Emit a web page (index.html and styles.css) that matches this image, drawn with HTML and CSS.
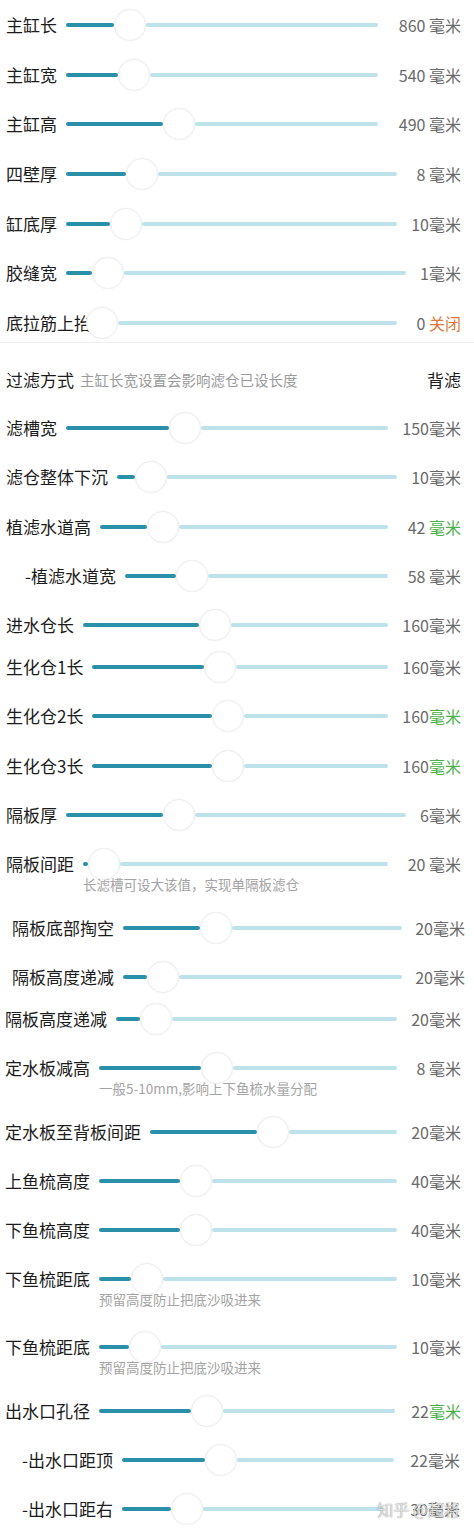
FILE: index.html
```html
<!DOCTYPE html>
<html lang="zh-CN">
<head>
<meta charset="utf-8">
<title>鱼缸参数设置</title>
<link rel="stylesheet" href="styles.css">
</head>
<body>
<main class="panel">

  <section class="group group--tank">
    <div class="row end-378">
      <span class="label">主缸长</span>
      <div class="slider"><i class="fill" style="width:48px"></i><i class="thumb"></i><i class="rest"></i></div>
      <span class="value">860 毫米</span>
    </div>
    <div class="row end-378">
      <span class="label">主缸宽</span>
      <div class="slider"><i class="fill" style="width:52px"></i><i class="thumb"></i><i class="rest"></i></div>
      <span class="value">540 毫米</span>
    </div>
    <div class="row end-378">
      <span class="label">主缸高</span>
      <div class="slider"><i class="fill" style="width:97px"></i><i class="thumb"></i><i class="rest"></i></div>
      <span class="value">490 毫米</span>
    </div>
    <div class="row end-397">
      <span class="label">四壁厚</span>
      <div class="slider"><i class="fill" style="width:60px"></i><i class="thumb"></i><i class="rest"></i></div>
      <span class="value">8 毫米</span>
    </div>
    <div class="row end-397">
      <span class="label">缸底厚</span>
      <div class="slider"><i class="fill" style="width:44px"></i><i class="thumb"></i><i class="rest"></i></div>
      <span class="value">10毫米</span>
    </div>
    <div class="row end-406">
      <span class="label">胶缝宽</span>
      <div class="slider"><i class="fill" style="width:26px"></i><i class="thumb"></i><i class="rest"></i></div>
      <span class="value">1毫米</span>
    </div>
    <div class="row end-397">
      <span class="label">底拉筋上抬</span>
      <div class="slider slider--overlap"><i class="fill" style="width:0px"></i><i class="thumb"></i><i class="rest"></i></div>
      <span class="value">0 <em class="off">关闭</em></span>
    </div>
  </section>

  <hr class="divider">

  <div class="filter-head">
    <span class="label">过滤方式</span>
    <span class="filter-note">主缸长宽设置会影响滤仓已设长度</span>
    <span class="filter-type">背滤</span>
  </div>

  <section class="group group--filter">
    <div class="row end-388">
      <span class="label">滤槽宽</span>
      <div class="slider"><i class="fill" style="width:103px"></i><i class="thumb"></i><i class="rest"></i></div>
      <span class="value">150毫米</span>
    </div>
    <div class="row end-397">
      <span class="label">滤仓整体下沉</span>
      <div class="slider"><i class="fill" style="width:18px"></i><i class="thumb"></i><i class="rest"></i></div>
      <span class="value">10毫米</span>
    </div>
    <div class="row end-388">
      <span class="label">植滤水道高</span>
      <div class="slider"><i class="fill" style="width:47px"></i><i class="thumb"></i><i class="rest"></i></div>
      <span class="value">42 <em class="ok">毫米</em></span>
    </div>
    <div class="row row--sub end-388">
      <span class="label">-植滤水道宽</span>
      <div class="slider"><i class="fill" style="width:51px"></i><i class="thumb"></i><i class="rest"></i></div>
      <span class="value">58 毫米</span>
    </div>
    <div class="row end-388">
      <span class="label">进水仓长</span>
      <div class="slider"><i class="fill" style="width:116px"></i><i class="thumb"></i><i class="rest"></i></div>
      <span class="value">160毫米</span>
    </div>
    <div class="row row--tight end-388">
      <span class="label">生化仓1长</span>
      <div class="slider"><i class="fill" style="width:112px"></i><i class="thumb"></i><i class="rest"></i></div>
      <span class="value">160毫米</span>
    </div>
    <div class="row end-388">
      <span class="label">生化仓2长</span>
      <div class="slider"><i class="fill" style="width:120px"></i><i class="thumb"></i><i class="rest"></i></div>
      <span class="value">160<em class="ok">毫米</em></span>
    </div>
    <div class="row end-388">
      <span class="label">生化仓3长</span>
      <div class="slider"><i class="fill" style="width:120px"></i><i class="thumb"></i><i class="rest"></i></div>
      <span class="value">160<em class="ok">毫米</em></span>
    </div>
    <div class="row end-406">
      <span class="label">隔板厚</span>
      <div class="slider"><i class="fill" style="width:97px"></i><i class="thumb"></i><i class="rest"></i></div>
      <span class="value">6毫米</span>
    </div>
    <div class="row end-388">
      <span class="label">隔板间距</span>
      <div class="slider"><i class="fill" style="width:5px"></i><i class="thumb"></i><i class="rest"></i></div>
      <span class="value">20 毫米</span>
      <p class="hint">长滤槽可设大该值，实现单隔板滤仓</p>
    </div>
    <div class="row row--indent end-402">
      <span class="label">隔板底部掏空</span>
      <div class="slider"><i class="fill" style="width:77px"></i><i class="thumb"></i><i class="rest"></i></div>
      <span class="value">20毫米</span>
    </div>
    <div class="row row--indent end-402">
      <span class="label">隔板高度递减</span>
      <div class="slider"><i class="fill" style="width:24px"></i><i class="thumb"></i><i class="rest"></i></div>
      <span class="value">20毫米</span>
    </div>
    <div class="row row--flush row--tight end-397">
      <span class="label">隔板高度递减</span>
      <div class="slider"><i class="fill" style="width:24px"></i><i class="thumb"></i><i class="rest"></i></div>
      <span class="value">20毫米</span>
    </div>
    <div class="row row--flush end-397">
      <span class="label">定水板减高</span>
      <div class="slider"><i class="fill" style="width:102px"></i><i class="thumb"></i><i class="rest"></i></div>
      <span class="value">8 毫米</span>
      <p class="hint">一般5-10mm,影响上下鱼梳水量分配</p>
    </div>
    <div class="row row--flush end-397">
      <span class="label">定水板至背板间距</span>
      <div class="slider"><i class="fill" style="width:107px"></i><i class="thumb"></i><i class="rest"></i></div>
      <span class="value">20毫米</span>
    </div>
    <div class="row row--flush end-397">
      <span class="label">上鱼梳高度</span>
      <div class="slider"><i class="fill" style="width:81px"></i><i class="thumb"></i><i class="rest"></i></div>
      <span class="value">40毫米</span>
    </div>
    <div class="row row--flush end-397">
      <span class="label">下鱼梳高度</span>
      <div class="slider"><i class="fill" style="width:81px"></i><i class="thumb"></i><i class="rest"></i></div>
      <span class="value">40毫米</span>
    </div>
    <div class="row row--flush end-397">
      <span class="label">下鱼梳距底</span>
      <div class="slider"><i class="fill" style="width:32px"></i><i class="thumb"></i><i class="rest"></i></div>
      <span class="value">10毫米</span>
      <p class="hint hint--loose">预留高度防止把底沙吸进来</p>
    </div>
    <div class="row row--flush end-397">
      <span class="label">下鱼梳距底</span>
      <div class="slider"><i class="fill" style="width:30px"></i><i class="thumb"></i><i class="rest"></i></div>
      <span class="value">10毫米</span>
      <p class="hint">预留高度防止把底沙吸进来</p>
    </div>
    <div class="row row--flush end-395">
      <span class="label">出水口孔径</span>
      <div class="slider"><i class="fill" style="width:92px"></i><i class="thumb"></i><i class="rest"></i></div>
      <span class="value">22<em class="ok">毫米</em></span>
    </div>
    <div class="row row--outlet end-395">
      <span class="label">-出水口距顶</span>
      <div class="slider"><i class="fill" style="width:83px"></i><i class="thumb"></i><i class="rest"></i></div>
      <span class="value">22毫米</span>
    </div>
    <div class="row row--outlet end-385">
      <span class="label">-出水口距右</span>
      <div class="slider"><i class="fill" style="width:49px"></i><i class="thumb"></i><i class="rest"></i></div>
      <span class="value value--marked">30毫米<span class="watermark">知乎 @超将</span></span>
    </div>
  </section>

</main>
</body>
</html>
```

FILE: styles.css
```css
* {
  box-sizing: border-box;
}

html,
body {
  margin: 0;
  background: #ffffff;
}

body {
  font-family: "Noto Sans CJK SC", "Noto Sans", sans-serif;
  color: #1f1f1f;
  -webkit-font-smoothing: antialiased;
}

.panel {
  width: 474px;
  padding: 9px 13px 0 0;
}

/* ---------- slider rows ---------- */

.group {
  display: flex;
  flex-direction: column;
}

.group--tank {
  gap: 17.67px;
}

.group--filter {
  gap: 17.3px;
  margin-top: 16px;
}

.row {
  --value-w: 55px;
  display: grid;
  grid-template-columns: auto 1fr var(--value-w);
  grid-template-rows: 32px;
  column-gap: 9px;
  align-items: center;
  padding-left: 6px;
}

.row--tight {
  margin-top: -7.3px;
}

.row--indent {
  padding-left: 12px;
  margin-right: -4px;
}

.row--flush {
  padding-left: 5px;
}

.row--sub {
  padding-left: 25px;
}

.row--outlet {
  padding-left: 22px;
  margin-right: 1px;
}

/* right end of the track, expressed as the width left for the value */
.end-378 { --value-w: 74px; }
.end-385 { --value-w: 67px; }
.end-388 { --value-w: 64px; }
.end-395 { --value-w: 57px; }
.end-397 { --value-w: 55px; }
.end-402 { --value-w: 54px; }
.end-406 { --value-w: 46px; }

.label {
  font-size: 17px;
  line-height: 24px;
  color: #1c1c1c;
  white-space: nowrap;
}

.value {
  font-size: 16px;
  line-height: 24px;
  color: #6a6a6a;
  text-align: right;
  white-space: nowrap;
}

.value em {
  font-style: normal;
}

.off {
  color: #e0793a;
}

.ok {
  color: #4db14a;
}

.slider {
  position: relative;
  display: flex;
  align-items: center;
  height: 32px;
}

.slider--overlap {
  margin-left: -14px;
}

.fill,
.rest {
  display: block;
  height: 4px;
  border-radius: 2px;
}

.fill {
  flex: none;
  background: #2a90aa;
}

.rest {
  flex: 1;
  background: #bde2ea;
}

.thumb {
  flex: none;
  display: block;
  width: 32px;
  height: 32px;
  border-radius: 50%;
  background: #ffffff;
  border: 1px solid #eeeeee;
  box-shadow: 0 0 2px rgba(0, 0, 0, 0.06);
  position: relative;
  z-index: 1;
}

.hint {
  grid-column: 2 / 4;
  margin: -4px 0 2px;
  font-size: 13.5px;
  line-height: 16px;
  color: #a4a4a4;
  white-space: nowrap;
}

.hint--loose {
  margin-bottom: 6.7px;
}

/* ---------- filter header ---------- */

.divider {
  margin: 3px -13px 0 0;
  border: 0;
  border-top: 1px solid #efefef;
}

.filter-head {
  display: flex;
  align-items: center;
  height: 32px;
  margin-top: 21px;
  padding-left: 6px;
}

.filter-note {
  margin-left: 6px;
  font-size: 14.5px;
  color: #9b9b9b;
}

.filter-type {
  margin-left: auto;
  font-size: 17px;
  color: #1c1c1c;
}

/* ---------- site mark ---------- */

.value--marked {
  position: relative;
}

.watermark {
  position: absolute;
  right: 0;
  top: 0;
  font-size: 16px;
  color: rgba(255, 255, 255, 0.75);
  text-shadow: 0 0 1px rgba(90, 90, 90, 0.9);
}
```
